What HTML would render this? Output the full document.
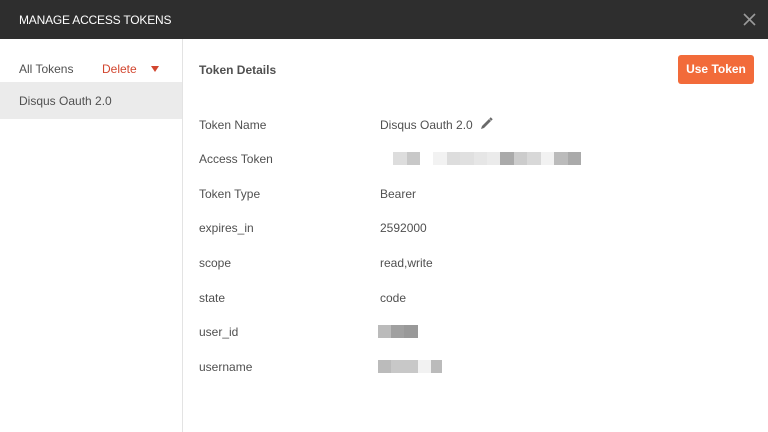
<!DOCTYPE html>
<html><head><meta charset="utf-8"><style>
*{margin:0;padding:0;box-sizing:border-box}
body{width:768px;height:432px;background:#fff;font-family:"Liberation Sans",sans-serif;font-size:12px;color:#505050;position:relative;overflow:hidden}
.hdr{position:absolute;left:0;top:0;width:768px;height:39px;background:#2e2e2e;color:#fff}
.hdr .t{position:absolute;left:19px;top:13px;font-size:12px;letter-spacing:-0.2px}
.left{position:absolute;left:0;top:39px;width:183px;height:393px;border-right:1px solid #e3e3e3}
.a{position:absolute}
.sel{position:absolute;left:0;top:82px;width:182px;height:37px;background:#ebebeb}
.p{position:absolute;height:13px}
</style></head><body>
<div class="hdr"><div class="t">MANAGE ACCESS TOKENS</div>
<svg class="a" style="left:743px;top:13px" width="13" height="13" viewBox="0 0 13 13"><path d="M1 1L12 12M12 1L1 12" stroke="#9a9a9a" stroke-width="1.6"/></svg></div>
<div class="left"></div>
<div class="sel"></div>
<div class="a" style="left:19px;top:62px">All Tokens</div>
<div class="a" style="left:102px;top:62px;color:#d2462f">Delete</div>
<svg class="a" style="left:151px;top:66px" width="8" height="6" viewBox="0 0 8 6"><path d="M0 0H8L4 6Z" fill="#d2462f"/></svg>
<div class="a" style="left:19px;top:94px">Disqus Oauth 2.0</div>
<div class="a" style="left:199px;top:63px;font-weight:bold;color:#505050">Token Details</div>
<div class="a" style="left:678px;top:55px;width:76px;height:29px;background:#f26b3a;border-radius:3px;color:#fff;font-weight:bold;text-align:center;line-height:29px">Use Token</div>
<div class="a" style="left:199px;top:118px">Token Name</div>
<div class="a" style="left:199px;top:152px">Access Token</div>
<div class="a" style="left:199px;top:187px">Token Type</div>
<div class="a" style="left:199px;top:221px">expires_in</div>
<div class="a" style="left:199px;top:256px">scope</div>
<div class="a" style="left:199px;top:291px">state</div>
<div class="a" style="left:199px;top:325px">user_id</div>
<div class="a" style="left:199px;top:360px">username</div>
<div class="a" style="left:380px;top:118px">Disqus Oauth 2.0</div>
<svg class="a" style="left:480px;top:117px" width="13" height="13" viewBox="0 0 13 13"><path d="M1 12L2 9L9 2L11 4L4 11Z" fill="#6a6a6a"/><path d="M10 1L12 3" stroke="#6a6a6a" stroke-width="2"/></svg>
<div class="a" style="left:380px;top:187px">Bearer</div>
<div class="a" style="left:380px;top:221px">2592000</div>
<div class="a" style="left:380px;top:256px">read,write</div>
<div class="a" style="left:380px;top:291px">code</div>
<div class="p" style="top:152px;left:393px;width:14px;background:#ddd"></div>
<div class="p" style="top:152px;left:407px;width:13px;background:#c8c8c8"></div>
<div class="p" style="top:152px;left:433px;width:14px;background:#f2f2f2"></div>
<div class="p" style="top:152px;left:447px;width:13px;background:#ddd"></div>
<div class="p" style="top:152px;left:460px;width:14px;background:#e0e0e0"></div>
<div class="p" style="top:152px;left:474px;width:13px;background:#e6e6e6"></div>
<div class="p" style="top:152px;left:487px;width:13px;background:#ebebeb"></div>
<div class="p" style="top:152px;left:500px;width:14px;background:#aaa"></div>
<div class="p" style="top:152px;left:514px;width:13px;background:#ccc"></div>
<div class="p" style="top:152px;left:527px;width:14px;background:#d8d8d8"></div>
<div class="p" style="top:152px;left:541px;width:13px;background:#f2f2f2"></div>
<div class="p" style="top:152px;left:554px;width:14px;background:#bbb"></div>
<div class="p" style="top:152px;left:568px;width:13px;background:#aaa"></div>
<div class="p" style="top:325px;left:378px;width:13px;background:#bbb"></div>
<div class="p" style="top:325px;left:391px;width:13px;background:#a0a0a0"></div>
<div class="p" style="top:325px;left:404px;width:14px;background:#999"></div>
<div class="p" style="top:360px;left:378px;width:13px;background:#bbb"></div>
<div class="p" style="top:360px;left:391px;width:27px;background:#c8c8c8"></div>
<div class="p" style="top:360px;left:418px;width:13px;background:#f2f2f2"></div>
<div class="p" style="top:360px;left:431px;width:11px;background:#bbb"></div>
</body></html>
